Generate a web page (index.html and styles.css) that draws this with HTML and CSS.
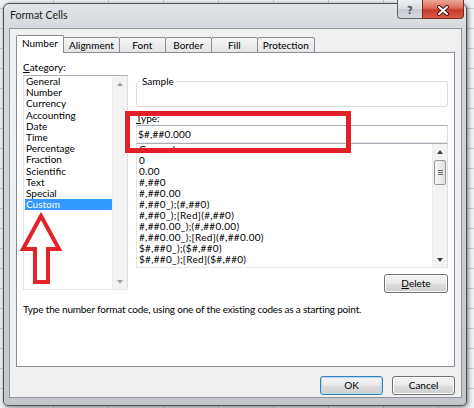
FILE: index.html
```html
<!DOCTYPE html>
<html lang="en">
<head>
<meta charset="utf-8">
<title>Format Cells</title>
<link rel="stylesheet" href="styles.css">
</head>
<body>
<div class="window">
  <div class="titlebar"><span class="title">Format Cells</span></div>
  <div class="caption">
    <div class="cap help"><span>?</span></div>
    <div class="cap close">
      <svg width="14" height="11" viewBox="0 0 14 11"><path d="M3 2 L11 9 M11 2 L3 9" stroke="#4a1710" stroke-width="4" stroke-linecap="round"/><path d="M3 2 L11 9 M11 2 L3 9" stroke="#ffffff" stroke-width="2" stroke-linecap="round"/></svg>
    </div>
  </div>
  <div class="client">
    <div class="tabs">
      <div class="tab active">Number</div>
      <div class="tab">Alignment</div>
      <div class="tab">Font</div>
      <div class="tab">Border</div>
      <div class="tab">Fill</div>
      <div class="tab">Protection</div>
    </div>
    <div class="page">
      <div class="cols">
        <div class="left">
          <div class="label"><u>C</u>ategory:</div>
          <div class="listbox cat">
            <ul class="items">
              <li>General</li>
              <li>Number</li>
              <li>Currency</li>
              <li>Accounting</li>
              <li>Date</li>
              <li>Time</li>
              <li>Percentage</li>
              <li>Fraction</li>
              <li>Scientific</li>
              <li>Text</li>
              <li>Special</li>
              <li class="selected">Custom</li>
            </ul>
            <div class="vscroll disabled">
              <span class="sbtn"><i class="tri up"></i></span>
              <span class="track"></span>
              <span class="sbtn"><i class="tri down"></i></span>
            </div>
          </div>
        </div>
        <div class="right">
          <div class="sample"><span class="legend">Sample</span></div>
          <div class="label type-label"><u>T</u>ype:</div>
          <div class="input">$#,##0.000</div>
          <div class="listbox codes">
            <ul class="items">
              <li>General</li>
              <li>0</li>
              <li>0.00</li>
              <li>#,##0</li>
              <li>#,##0.00</li>
              <li>#,##0_);(#,##0)</li>
              <li>#,##0_);[Red](#,##0)</li>
              <li>#,##0.00_);(#,##0.00)</li>
              <li>#,##0.00_);[Red](#,##0.00)</li>
              <li>$#,##0_);($#,##0)</li>
              <li>$#,##0_);[Red]($#,##0)</li>
            </ul>
            <div class="vscroll">
              <span class="sbtn"><i class="tri up"></i></span>
              <span class="thumb"><i></i><i></i><i></i></span>
              <span class="track"></span>
              <span class="sbtn"><i class="tri down"></i></span>
            </div>
          </div>
          <div class="del-row"><button class="btn del"><u>D</u>elete</button></div>
        </div>
      </div>
      <p class="desc">Type the number format code, using one of the existing codes as a starting point.</p>
      <div class="redbox"></div>
      <svg class="arrow" width="60" height="240" viewBox="0 0 60 240"><polygon points="24,163 42,196 31,196 31,229 18,229 18,196 6,196" fill="none" stroke="#e3232b" stroke-width="4" stroke-linejoin="miter"/></svg>
    </div>
    <div class="footer">
      <button class="btn ok">OK</button>
      <button class="btn">Cancel</button>
    </div>
  </div>
</div>
</body>
</html>
```
FILE: styles.css
```css
* { box-sizing: border-box; }
html, body { margin: 0; padding: 0; }
body {
  width: 474px;
  height: 408px;
  overflow: hidden;
  background-color: #eef0f2;
  background-image:
    linear-gradient(90deg, #c9cdd3 1px, transparent 1px),
    linear-gradient(#c9cdd3 1px, transparent 1px);
  background-size: 55px 100%, 100% 20px;
  background-position: 53px 0, 0 8px;
  font-family: Lato, "Liberation Sans", sans-serif;
  font-size: 10px;
  color: #000;
}
.window {
  position: relative;
  margin: 3px 0 0 3px;
  width: 464px;
  height: 403px;
  border: 1px solid #4d5258;
  border-radius: 6px 6px 5px 5px;
  background: linear-gradient(#e2e4e7 0, #d5d8dc 26px, #c3c7cc 100%);
  box-shadow: 1px 1px 4px rgba(0, 0, 0, 0.55);
}
.titlebar {
  height: 24px;
  padding-left: 6px;
  line-height: 23px;
  font-size: 10.5px;
  color: #1b1b1b;
}
.caption {
  position: absolute;
  top: -4px;
  right: 2px;
  display: flex;
}
.cap {
  height: 19px;
  border: 1px solid #5e6369;
  border-top: none;
  display: flex;
  align-items: center;
  justify-content: center;
}
.help {
  width: 25px;
  border-right: none;
  border-radius: 0 0 0 4px;
  background: linear-gradient(#eef0f3 0%, #dadde1 48%, #c6cbd1 52%, #d6dade 100%);
  color: #50555b;
  font-family: "DejaVu Sans", sans-serif;
  font-size: 10px;
  font-weight: bold;
  padding-top: 3px;
}
.close {
  width: 42px;
  border-color: #7a2a22;
  border-radius: 0 0 4px 0;
  background: linear-gradient(#eba697 0%, #dc6a58 45%, #c93a2b 55%, #d9594a 100%);
  padding-top: 3px;
}
.client {
  margin: 0 4px 0 5px;
  height: 370px;
  border: 1px solid #8f959b;
  background: #f0f0f0;
  padding: 6px 6px 2px 6px;
}
.tabs {
  display: flex;
  align-items: flex-end;
  height: 18px;
  margin-bottom: -1px;
}
.tab {
  min-width: 47px;
  height: 16px;
  padding: 0 5px;
  border: 1px solid #898c95;
  border-radius: 2px 2px 0 0;
  background: linear-gradient(#f6f6f6, #e4e4e4);
  text-align: center;
  line-height: 14px;
  margin-left: -1px;
  white-space: nowrap;
}
.tab:first-child { margin-left: 0; }
.tab.active {
  position: relative;
  z-index: 1;
  height: 18px;
  background: #fff;
  border-bottom: none;
  line-height: 15px;
}
.page {
  position: relative;
  height: 315px;
  border: 1px solid #898c95;
  background: #fff;
}
.cols {
  display: flex;
  gap: 8px;
  padding: 8px 6px 0 6px;
}
.left { width: 105px; }
.right { width: 312px; }
.label { line-height: 12px; height: 12px; }
.listbox {
  display: flex;
  border: 1px solid #abadb3;
  border-color: #abadb3 #dbdfe6 #e3e9ef #e2e3ea;
  background: #fff;
}
.cat { margin-top: 2px; height: 215px; }
.items {
  list-style: none;
  margin: 0;
  padding: 0;
  flex: 1;
  min-width: 0;
}
.items li {
  line-height: 11.2px;
  height: 11.2px;
  white-space: nowrap;
}
.cat .items li { margin-left: 1px; padding-left: 1px; }
.cat .items li.selected { background: #3399ff; color: #fff; }
.codes .items li { line-height: 11px; height: 11px; padding-left: 2px; letter-spacing: 0.3px; }
.vscroll {
  width: 15px;
  display: flex;
  flex-direction: column;
  background: #f3f3f3;
  border-left: 1px solid #ececec;
}
.sbtn {
  height: 15px;
  display: flex;
  align-items: center;
  justify-content: center;
}
.track { flex: 1; }
.tri { display: block; width: 0; height: 0; border-left: 3.5px solid transparent; border-right: 3.5px solid transparent; }
.tri.up { border-bottom: 4px solid #404040; }
.tri.down { border-top: 4px solid #404040; }
.disabled .tri.up { border-bottom-color: #a3a3a3; }
.disabled .tri.down { border-top-color: #a3a3a3; }
.thumb {
  height: 25px;
  margin: 1px 1px 0 1px;
  border: 1px solid #979797;
  border-radius: 2px;
  background: linear-gradient(90deg, #f5f5f5, #e2e2e2);
  display: flex;
  flex-direction: column;
  align-items: center;
  justify-content: center;
  gap: 1px;
}
.thumb i { display: block; width: 5px; height: 1px; background: #6c6c6c; }
.sample {
  margin-top: 20px;
  height: 26px;
  border: 1px solid #d9dce0;
  border-radius: 3px;
}
.legend {
  display: inline-block;
  margin: -7px 0 0 3px;
  padding: 0 2px;
  line-height: 12px;
  background: #fff;
  vertical-align: top;
}
.type-label { margin-top: 5px; }
.input {
  margin-top: 1px;
  height: 18px;
  border: 1px solid #abadb3;
  border-color: #abadb3 #dbdfe6 #e3e9ef #e2e3ea;
  padding-left: 1px;
  line-height: 16px;
  letter-spacing: 0.2px;
}
.codes { height: 125px; }
.del-row { display: flex; justify-content: flex-end; margin-top: 6px; }
.btn {
  width: 63px;
  height: 19px;
  padding: 0;
  border: 1px solid #707070;
  border-radius: 3px;
  background: linear-gradient(#f3f3f3 0%, #ebebeb 48%, #dddddd 52%, #cfcfcf 100%);
  box-shadow: inset 0 0 0 1px #fbfbfb;
  font-family: Lato, "Liberation Sans", sans-serif;
  font-size: 10px;
  color: #000;
  line-height: 17px;
}
.btn.del { width: 64px; }
.btn.ok {
  border-color: #3c7fb1;
  box-shadow: inset 0 0 0 1px #a8dcf6;
}
.desc {
  margin: 10px 0 0 0;
  padding-left: 6px;
  line-height: 12px;
  letter-spacing: -0.18px;
}
.redbox {
  position: absolute;
  left: 108px;
  top: 58px;
  width: 226px;
  height: 42px;
  border: 5px solid #e3202a;
}
.arrow {
  position: absolute;
  left: 0;
  top: 0;
}
.footer {
  display: flex;
  justify-content: flex-end;
  gap: 9px;
  margin-top: 9px;
}
```
